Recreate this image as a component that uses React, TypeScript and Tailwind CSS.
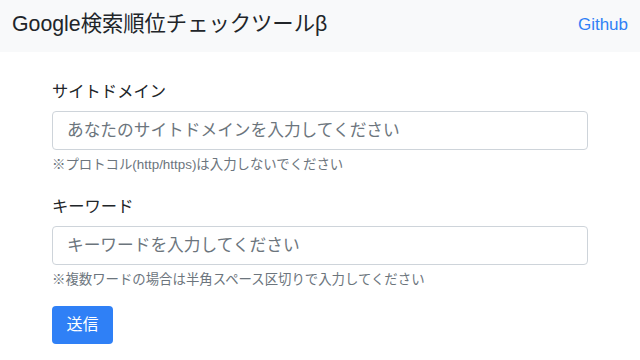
import React from 'react';

const font = { fontFamily: '"Liberation Sans", "Noto Sans CJK JP", sans-serif' };

function Field({
  label,
  placeholder,
  help,
}: {
  label: string;
  placeholder: string;
  help: string;
}) {
  return (
    <div className="mb-[20px]">
      <label className="block h-6 text-[16.3px] leading-6 text-[#212529] mb-2">{label}</label>
      <input
        type="text"
        placeholder={placeholder}
        className="block w-[536px] h-[39px] px-[14px] text-[16.7px] text-[#495057] bg-white border border-[#ced4da] rounded-[4px] placeholder:text-[#6c757d] outline-none"
      />
      <small className="block mt-[5px] text-[13.4px] leading-[19px] text-[#6c757d]">{help}</small>
    </div>
  );
}

export default function App() {
  return (
    <div className="w-[640px] h-[360px] bg-white overflow-hidden" style={font}>
      {/* Navbar */}
      <nav className="h-[52px] bg-[#f8f9fa] flex items-center justify-between pl-3 pr-3">
        <a href="#" className="text-[21.3px] leading-none text-[#212529] -mt-[2px]">
          Google検索順位チェックツールβ
        </a>
        <a href="#" className="text-[17px] text-[#2f80f6] -mt-[2px]">
          Github
        </a>
      </nav>

      {/* Form */}
      <main className="pl-[52px] pt-[27px]">
        <form>
          <Field
            label="サイトドメイン"
            placeholder="あなたのサイトドメインを入力してください"
            help="※プロトコル(http/https)は入力しないでください"
          />
          <Field
            label="キーワード"
            placeholder="キーワードを入力してください"
            help="※複数ワードの場合は半角スペース区切りで入力してください"
          />
          <button
            type="button"
            className="-mt-[3px] h-[38px] w-[61px] rounded-[4px] bg-[#2f80f6] text-white text-base"
          >
            送信
          </button>
        </form>
      </main>
    </div>
  );
}
